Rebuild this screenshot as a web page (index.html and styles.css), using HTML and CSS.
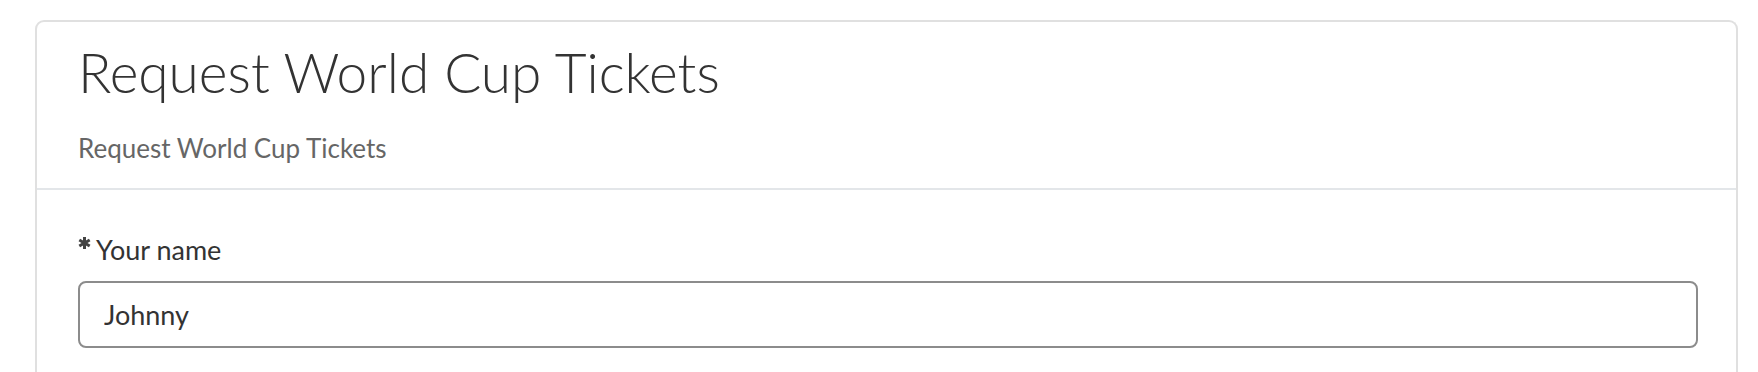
FILE: index.html
```html
<!DOCTYPE html>
<html>
<head>
<meta charset="utf-8">
<link rel="stylesheet" href="styles.css">
</head>
<body>
<div class="page">
  <div class="card">
    <div class="card-header">
      <h1 class="title">Request World Cup Tickets</h1>
      <p class="subtitle">Request World Cup Tickets</p>
    </div>
    <div class="card-body">
      <div class="field">
        <label class="label" for="name"><svg class="req" width="13" height="12" viewBox="0 0 13 12" aria-hidden="true"><g stroke="#444" stroke-width="3" stroke-linecap="butt"><line x1="6.5" y1="0" x2="6.5" y2="12"/><line x1="1.3" y1="3" x2="11.7" y2="9"/><line x1="1.3" y1="9" x2="11.7" y2="3"/></g></svg>Your name</label>
        <input class="input" id="name" type="text" value="Johnny">
      </div>
    </div>
  </div>
</div>
</body>
</html>
```
FILE: styles.css
```css
html, body {
  margin: 0;
  padding: 0;
  background: #ffffff;
  height: 372px;
  overflow: hidden;
}
.page {
  padding: 20px 20px 0 35px;
  font-family: Lato, "Liberation Sans", sans-serif;
}
.card {
  border: 2px solid #e0e0e0;
  border-bottom: none;
  border-radius: 9px 9px 0 0;
  height: 400px;
  box-sizing: border-box;
}
.card-header {
  padding: 18px 40px 0 41px;
  height: 168px;
  box-sizing: border-box;
  border-bottom: 2px solid #e3e6e9;
}
.title {
  margin: 0;
  font-size: 55px;
  font-weight: 300;
  line-height: 64px;
  color: #333333;
}
.subtitle {
  margin: 28px 0 0 0;
  font-size: 26px;
  line-height: 32px;
  color: #666666;
}
.card-body {
  padding: 42px 40px 0 41px;
}
.label {
  display: flex;
  align-items: flex-start;
  font-size: 27px;
  line-height: 36px;
  color: #333333;
}
.req {
  flex: none;
  margin: 5px 5px 0 0;
}
.input {
  display: block;
  box-sizing: border-box;
  margin-top: 13px;
  width: 1620px;
  height: 67px;
  border: 2px solid #8c8c8c;
  border-radius: 8px;
  padding: 0 24px;
  font-family: Lato, "Liberation Sans", sans-serif;
  font-size: 27px;
  color: #333333;
  background: #ffffff;
  outline: none;
}
```
